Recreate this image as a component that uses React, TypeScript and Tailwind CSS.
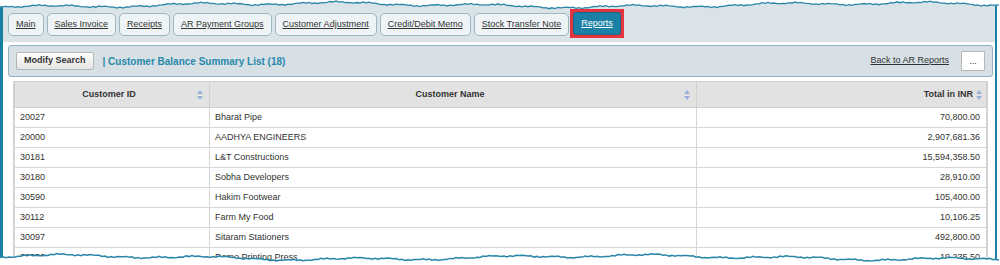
import React from 'react';

const rows = [
  { id: '20027', name: 'Bharat Pipe', total: '70,800.00' },
  { id: '20000', name: 'AADHYA ENGINEERS', total: '2,907,681.36' },
  { id: '30181', name: 'L&T Constructions', total: '15,594,358.50' },
  { id: '30180', name: 'Sobha Developers', total: '28,910.00' },
  { id: '30590', name: 'Hakim Footwear', total: '105,400.00' },
  { id: '30112', name: 'Farm My Food', total: '10,106.25' },
  { id: '30097', name: 'Sitaram Stationers', total: '492,800.00' },
  { id: '30350', name: 'Demo Printing Press', total: '19,235.50' },
];

const tabs = ['Main', 'Sales Invoice', 'Receipts', 'AR Payment Groups', 'Customer Adjustment', 'Credit/Debit Memo', 'Stock Transfer Note'];

// jagged "torn paper" line
const tear = (seed: number, base: number, amp: number) => {
  const pts: string[] = [];
  for (let x = 0; x <= 1000; x += 3) {
    const y =
      base +
      Math.sin(x * 0.011 + seed) * amp * 0.45 +
      Math.sin(x * 0.043 + seed * 2) * amp * 0.3 +
      Math.sin(x * 0.19 + seed * 3) * amp * 0.15 +
      Math.sin(x * 0.93 + seed * 5) * amp * 0.12;
    pts.push(`${x},${y.toFixed(1)}`);
  }
  return pts;
};

const topPts = tear(1.3, 5, 4);
const botPts = tear(4.1, 257.5, 4);

const SortIcon = () => (
  <svg width="6" height="10" viewBox="0 0 6 10" className="shrink-0">
    <path d="M3 0 L6 4 L0 4 Z" fill="#9bb0d8" />
    <path d="M3 10 L6 6 L0 6 Z" fill="#9bb0d8" />
  </svg>
);

export default function App() {
  return (
    <div className="relative w-[1000px] h-[265px] overflow-hidden bg-white font-['Liberation_Sans',Arial,sans-serif] text-[#333]">
      <div className="w-[997px] h-full border-l-[3px] border-r-[2px] border-[#1b7fa4] bg-white">
        {/* tab strip */}
        <div className="h-[42px] bg-[#d9e3e8] pt-[13px] pl-[5px] flex items-start gap-[3px]">
          {tabs.map((t) => (
            <div
              key={t}
              className="h-[23px] px-[7px] flex items-center rounded-[5px] border border-[#9db6c2] bg-[#eef3f5] text-[9px] underline"
            >
              {t}
            </div>
          ))}
          <div className="-mt-[4px] -ml-[2px] p-[3px] bg-[#e63340]">
            <div className="h-[23px] px-[7px] flex items-center rounded-[3px] border border-[#0f6a8c] bg-[#1b80a6] text-[9px] text-white underline">
              Reports
            </div>
          </div>
        </div>

        {/* search panel */}
        <div className="mt-[3px] ml-[5px] mr-[2px] h-[32px] rounded-[3px] border border-[#8fb2c1] bg-[#d6e0e5] flex items-center pl-[7px] pr-[7px]">
          <button className="h-[18px] px-[7px] rounded-[2px] border border-[#b5b5b5] bg-gradient-to-b from-white to-[#e4e4e4] text-[9px] font-bold">
            Modify Search
          </button>
          <span className="ml-[9px] text-[10px] font-bold text-[#2a88ab]">| Customer Balance Summary List (18)</span>
          <span className="ml-auto text-[9px] underline">Back to AR Reports</span>
          <button className="ml-[12px] w-[24px] h-[20px] border border-[#b8b8b8] bg-white text-[9px] leading-none">...</button>
        </div>

        {/* table */}
        <div className="mt-[4px] ml-[10px] mr-[7px] border-l border-r border-[#d0d0d0]">
          <table className="w-full border-collapse text-[9px]">
            <thead>
              <tr className="h-[26px] bg-[#e2e2e2]">
                <th className="w-[195px] border border-[#d0d0d0] font-bold px-[6px]">
                  <div className="flex items-center">
                    <span className="flex-1 text-center">Customer ID</span>
                    <SortIcon />
                  </div>
                </th>
                <th className="w-[487px] border border-[#d0d0d0] font-bold px-[6px]">
                  <div className="flex items-center">
                    <span className="flex-1 text-center">Customer Name</span>
                    <SortIcon />
                  </div>
                </th>
                <th className="border border-[#d0d0d0] font-bold px-[4px]">
                  <div className="flex items-center justify-end gap-[3px]">
                    <span>Total in INR</span>
                    <SortIcon />
                  </div>
                </th>
              </tr>
            </thead>
            <tbody>
              {rows.map((r) => (
                <tr key={r.id} className="h-[20px]">
                  <td className="border border-[#d6d6d6] px-[5px]">{r.id}</td>
                  <td className="border border-[#d6d6d6] px-[5px]">{r.name}</td>
                  <td className="border border-[#d6d6d6] px-[6px] text-right">{r.total}</td>
                </tr>
              ))}
            </tbody>
          </table>
        </div>
      </div>

      {/* torn edges */}
      <svg className="absolute inset-0 pointer-events-none" width="1000" height="265" viewBox="0 0 1000 265">
        <path d={`M0,0 L${topPts.join(' L')} L1000,0 Z`} fill="#ffffff" />
        <polyline points={topPts.join(' ')} fill="none" stroke="#2a86a8" strokeWidth="1.3" />
        <path d={`M0,265 L${botPts.join(' L')} L1000,265 Z`} fill="#ffffff" />
        <polyline points={botPts.join(' ')} fill="none" stroke="#2a86a8" strokeWidth="1.5" />
      </svg>
    </div>
  );
}
